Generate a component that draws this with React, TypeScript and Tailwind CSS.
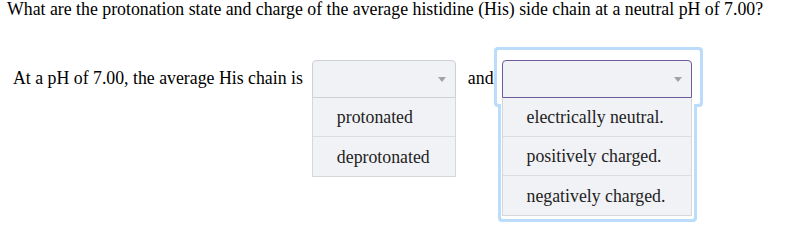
import React from "react";

function Caret() {
  return (
    <svg width="8" height="5" viewBox="0 0 8 5" className="block">
      <polygon points="0,0 8,0 4,5" fill="#a3a3a6" />
    </svg>
  );
}

function Select({
  width,
  options,
  focused,
}: {
  width: string;
  options: string[];
  focused?: boolean;
}) {
  return (
    <div className={`relative ${width}`}>
      {focused && (
        <>
          <div className="absolute left-[-8px] top-[-13px] w-[209px] h-[60px] rounded-[4px] bg-[#bcdcfb]" />
          <div className="absolute left-[-4px] top-[36px] w-[199px] h-[126px] rounded-[4px] bg-[#bcdcfb]" />
          <div className="absolute left-[-5px] top-[-10px] w-[203px] h-[54px] rounded-[2px] bg-white" />
          <div className="absolute left-[-1px] top-[39px] w-[193px] h-[120px] rounded-[2px] bg-white" />
        </>
      )}
      <div className="relative">
        <div
          className={`h-[38px] rounded-t-[4px] border bg-[#f1f2f6] flex items-center justify-end pr-[9px] ${
            focused ? "border-[#6c5b9b]" : "border-[#cfd0d4]"
          }`}
        >
          <Caret />
        </div>
        <div className="border-x border-b border-[#d6d7db] bg-[#f1f2f6]">
          {options.map((o, i) => (
            <div
              key={o}
              className={`h-[39px] flex items-center pl-[24px] text-[#222] ${
                i < options.length - 1 ? "border-b border-[#dcdde1]" : ""
              }`}
            >
              {o}
            </div>
          ))}
        </div>
      </div>
    </div>
  );
}

export default function App() {
  return (
    <div className="w-[794px] h-[250px] bg-white text-black text-[17.8px] leading-[18px] font-['Liberation_Serif',_'Times_New_Roman',_serif]">
      <p className="h-[20px] pl-[7px]">
        What are the protonation state and charge of the average histidine (His) side chain at a neutral pH of 7.00?
      </p>
      <div className="mt-[40px] flex items-start">
        <span className="h-[38px] flex items-center pl-[13px] pr-[9px] pb-[2px] whitespace-nowrap">
          At a pH of 7.00, the average His chain is
        </span>
        <Select width="w-[144px]" options={["protonated", "deprotonated"]} />
        <span className="h-[38px] flex items-center pl-[12px] pr-[8px] pb-[2px]">and</span>
        <Select
          width="w-[190px]"
          focused
          options={["electrically neutral.", "positively charged.", "negatively charged."]}
        />
      </div>
    </div>
  );
}
